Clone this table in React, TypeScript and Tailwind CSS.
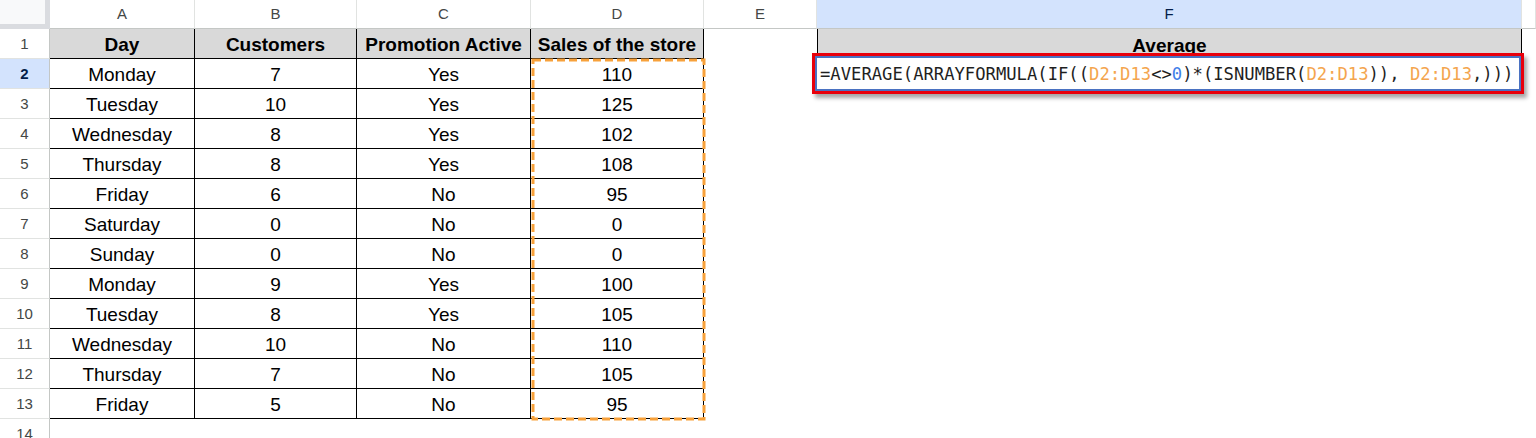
import React from 'react';

const cols = ['A', 'B', 'C', 'D', 'E', 'F', ''];

const rows: [string, string, string, string][] = [
  ['Monday', '7', 'Yes', '110'],
  ['Tuesday', '10', 'Yes', '125'],
  ['Wednesday', '8', 'Yes', '102'],
  ['Thursday', '8', 'Yes', '108'],
  ['Friday', '6', 'No', '95'],
  ['Saturday', '0', 'No', '0'],
  ['Sunday', '0', 'No', '0'],
  ['Monday', '9', 'Yes', '100'],
  ['Tuesday', '8', 'Yes', '105'],
  ['Wednesday', '10', 'No', '110'],
  ['Thursday', '7', 'No', '105'],
  ['Friday', '5', 'No', '95'],
];

const RowHead = ({ n, active }: { n: number; active?: boolean }) => (
  <div
    className={
      'h-[30px] flex items-center justify-center pt-[2px] text-[15px] border-r border-r-[#c4c7c5] border-b border-b-[#e1e3e1] ' +
      (active ? 'bg-[#d3e3fd] text-[#041e49] font-bold' : 'bg-white text-[#444746]')
    }
  >
    {n}
  </div>
);

const Cell = ({ children, head }: { children?: React.ReactNode; head?: boolean }) => (
  <div
    className={
      'h-[30px] flex items-center justify-center pt-[4px] text-[19px] text-black border-r border-b border-black whitespace-nowrap overflow-hidden ' +
      (head ? 'bg-[#d9d9d9] font-bold' : 'bg-white')
    }
  >
    {children}
  </div>
);

const Blank = () => <div className="h-[30px] bg-white" />;

const Orange = ({ children }: { children: React.ReactNode }) => <span className="text-[#f4a54e]">{children}</span>;

export default function App() {
  return (
    <div className="w-[1536px] h-[438px] overflow-hidden bg-white font-['Liberation_Sans',Arial,sans-serif]">
      <div className="relative grid grid-cols-[50px_145px_162px_174px_173px_113px_705px_1fr]">
        {/* column headers */}
        <div className="h-[29px] bg-[#f8f9fa] border-r-[5px] border-b-[5px] border-[#dadce0]" />
        {cols.map((c, i) => (
          <div
            key={i}
            className={
              'h-[29px] flex items-center justify-center text-[15px] border-b border-b-[#c4c7c5] border-r border-r-[#e1e3e1] ' +
              (c === 'F' ? 'bg-[#d3e3fd] text-[#041e49]' : 'bg-white text-[#444746]')
            }
          >
            {c}
          </div>
        ))}

        {/* row 1 */}
        <RowHead n={1} />
        <Cell head>Day</Cell>
        <Cell head>Customers</Cell>
        <Cell head>Promotion Active</Cell>
        <Cell head>Sales of the store</Cell>
        <Blank />
        <div className="h-[30px] flex items-center justify-center pt-[4px] text-[19px] font-bold bg-[#d9d9d9] border-l border-r border-black">
          Average
        </div>
        <Blank />

        {rows.map((r, i) => (
          <React.Fragment key={i}>
            <RowHead n={i + 2} active={i === 0} />
            {r.map((v, j) => (
              <Cell key={j}>{v}</Cell>
            ))}
            <Blank />
            <Blank />
            <Blank />
          </React.Fragment>
        ))}

        <RowHead n={14} />
        <Blank />

        {/* range highlight D2:D13 */}
        <svg className="absolute left-[531px] top-[58px] pointer-events-none" width="175" height="363">
          <rect x="2" y="2" width="171" height="359" fill="none" stroke="#f7a13b" strokeWidth="3" strokeDasharray="8 4" />
        </svg>

        {/* editing cell F2 */}
        <div className="absolute left-[812px] top-[53px] w-[712px] h-[41px] border-[3px] border-[#e8000b] shadow-[3px_4px_4px_rgba(0,0,0,0.35)]">
          <div className="h-full border-2 border-[#4a72c2] bg-white flex items-center pl-[3px] pt-[2px] font-['DejaVu_Sans_Mono',monospace] text-[17.2px] text-[#1f1f1f] whitespace-pre">
            {'=AVERAGE(ARRAYFORMULA(IF(('}
            <Orange>D2:D13</Orange>
            {'<>'}
            <span className="text-[#3f7ee8]">0</span>
            {')*(ISNUMBER('}
            <Orange>D2:D13</Orange>
            {')), '}
            <Orange>D2:D13</Orange>
            {',)))'}
          </div>
        </div>
      </div>
    </div>
  );
}
